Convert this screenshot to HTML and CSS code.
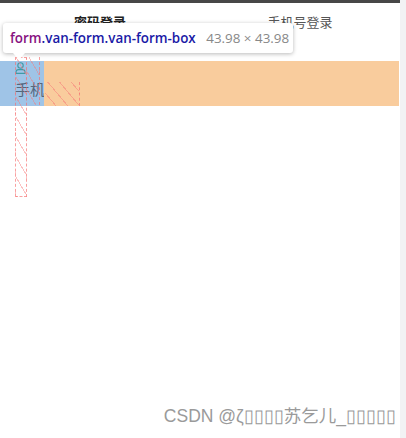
FILE: index.html
```html
<!DOCTYPE html>
<html>
<head>
<meta charset="utf-8">
<link rel="stylesheet" href="styles.css">
</head>
<body>
<div class="screen">
  <div class="main">
    <div class="topbar"></div>
    <div class="tabs">
      <div class="tab tab-active">密码登录</div>
      <div class="tab">手机号登录</div>
    </div>
    <div class="band">
      <form class="van-form van-form-box">
        <div class="field">
          <svg class="user-icon" width="11" height="12" viewBox="0 0 11 12">
            <circle cx="5.5" cy="3.5" r="2.7" fill="none" stroke="#3f9aa6" stroke-width="1.1"/>
            <path d="M1 11.4 V10 Q1 7.6 3.5 7.6 H7.5 Q10 7.6 10 10 V11.4 Z" fill="none" stroke="#3f9aa6" stroke-width="1.1"/>
          </svg>
          <div class="label">手机</div>
        </div>
      </form>
    </div>
    <div class="ov ov-a"></div>
    <div class="ov ov-b"></div>
    <div class="ov ov-c"></div>
    <div class="tooltip">
      <span class="tag">form</span><span class="cls">.van-form.van-form-box</span>
      <span class="dim">43.98 × 43.98</span>
      <div class="arrow"></div>
    </div>
    <div class="watermark">CSDN @ζ▯▯▯▯苏乞儿_▯▯▯▯▯</div>
  </div>
  <div class="scroll"></div>
</div>
</body>
</html>
```
FILE: styles.css
```css
html, body {
  margin: 0;
  padding: 0;
  background: #ffffff;
}
.screen {
  display: flex;
  width: 406px;
  height: 438px;
  overflow: hidden;
}
.main {
  position: relative;
  width: 400px;
  height: 438px;
  background: #ffffff;
}
.scroll {
  width: 6px;
  height: 438px;
  background: #f2f2f4;
}
.topbar {
  height: 3px;
  background: #474747;
}
.tabs {
  display: flex;
  height: 58px;
  font-family: "Noto Sans CJK SC", sans-serif;
}
.tab {
  flex: 1;
  text-align: center;
  font-size: 13px;
  line-height: 13px;
  padding-top: 12px;
  color: #555555;
}
.tab-active {
  color: #222222;
  font-weight: 700;
}
.band {
  height: 45px;
  background: #f9cc9d;
  width: 399px;
}
.van-form {
  margin: 0;
  width: 44px;
  height: 45px;
  background: #9fc4e7;
  overflow: hidden;
}
.field {
  padding-left: 15px;
  padding-top: 1px;
}
.user-icon {
  display: block;
}
.label {
  margin-top: 5px;
  font-family: "Noto Sans CJK SC", sans-serif;
  font-size: 15px;
  line-height: 20px;
  color: #56677c;
  white-space: nowrap;
}
.ov {
  position: absolute;
  border: 1px dashed rgba(246, 110, 110, 0.65);
  box-sizing: border-box;
}
.ov-a {
  left: 15px;
  top: 57px;
  width: 12px;
  height: 140px;
  background: repeating-linear-gradient(60deg, transparent 0 9px, rgba(246,120,120,0.45) 9px 10px);
}
.ov-b {
  left: 26px;
  top: 57px;
  width: 14px;
  height: 48px;
  border-left: none;
  border-top: none;
  border-bottom: none;
  background: repeating-linear-gradient(60deg, transparent 0 8px, rgba(246,120,120,0.45) 8px 9px);
}
.ov-c {
  left: 45px;
  top: 82px;
  width: 35px;
  height: 24px;
  border-left: none;
  border-top: none;
  border-bottom: none;
  background: repeating-linear-gradient(50deg, transparent 0 8px, rgba(246,120,120,0.5) 8px 9px);
}
.tooltip {
  position: absolute;
  left: 3px;
  top: 23px;
  width: 290px;
  height: 30px;
  box-sizing: border-box;
  padding-left: 7px;
  background: #ffffff;
  border-radius: 3px;
  box-shadow: 0 1px 4px rgba(0, 0, 0, 0.28);
  font-family: "Open Sans", sans-serif;
  font-size: 13.4px;
  line-height: 30px;
  white-space: nowrap;
}
.tag {
  color: #881280;
  font-weight: 600;
}
.cls {
  color: #1a1aa6;
  font-weight: 600;
}
.dim {
  color: #888888;
  margin-left: 7px;
}
.arrow {
  position: absolute;
  left: 10px;
  bottom: -7px;
  width: 0;
  height: 0;
  border-left: 6px solid transparent;
  border-right: 6px solid transparent;
  border-top: 7px solid #ffffff;
}
.watermark {
  position: absolute;
  right: 4px;
  top: 405px;
  font-family: "Liberation Sans", "Noto Sans CJK SC", sans-serif;
  font-size: 17.5px;
  line-height: 22px;
  color: #9a9a9a;
  white-space: nowrap;
  text-shadow: 0 0 1px #ffffff;
}
```
